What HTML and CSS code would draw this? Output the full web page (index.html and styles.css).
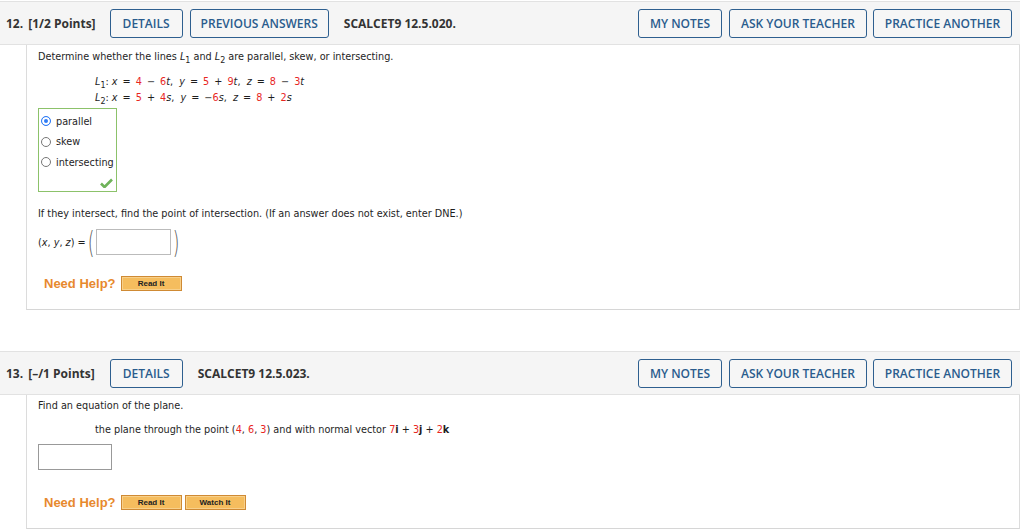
FILE: index.html
```html
<!DOCTYPE html>
<html>
<head>
<meta charset="utf-8">
<link rel="stylesheet" href="styles.css">
</head>
<body>
<div class="page">
  <section class="question q12">
    <header class="qhead">
      <span class="qnum">12.</span>
      <span class="qpts">[1/2 Points]</span>
      <button class="btn">DETAILS</button>
      <button class="btn prev">PREVIOUS ANSWERS</button>
      <span class="qcode">SCALCET9 12.5.020.</span>
      <div class="right">
        <button class="btn w-notes">MY NOTES</button>
        <button class="btn w-ask">ASK YOUR TEACHER</button>
        <button class="btn w-prac">PRACTICE ANOTHER</button>
      </div>
    </header>
    <div class="panel p12">
      <p class="txt">Determine whether the lines <i>L</i><sub>1</sub> and <i>L</i><sub>2</sub> are parallel, skew, or intersecting.</p>
      <div class="eqs">
        <div class="eq"><i>L</i><sub>1</sub>: <i>x</i><span class="op">=</span><span class="r">4</span><span class="op">&minus;</span><span class="r">6</span><i>t</i>,&nbsp;&nbsp;<i>y</i><span class="op">=</span><span class="r">5</span><span class="op">+</span><span class="r">9</span><i>t</i>,&nbsp;&nbsp;<i>z</i><span class="op">=</span><span class="r">8</span><span class="op">&minus;</span><span class="r">3</span><i>t</i></div>
        <div class="eq"><i>L</i><sub>2</sub>: <i>x</i><span class="op">=</span><span class="r">5</span><span class="op">+</span><span class="r">4</span><i>s</i>,&nbsp;&nbsp;<i>y</i><span class="op">=</span>&minus;<span class="r">6</span><i>s</i>,&nbsp;&nbsp;<i>z</i><span class="op">=</span><span class="r">8</span><span class="op">+</span><span class="r">2</span><i>s</i></div>
      </div>
      <div class="choices">
        <label class="opt"><span class="radio on"></span>parallel</label>
        <label class="opt"><span class="radio"></span>skew</label>
        <label class="opt"><span class="radio"></span>intersecting</label>
        <svg class="check" width="13" height="10" viewBox="0 0 13 10"><path d="M1 5.5 L4.5 9 L12 1.5" fill="none" stroke="#6fb35a" stroke-width="2.6" stroke-linejoin="round"/></svg>
      </div>
      <p class="txt t2">If they intersect, find the point of intersection. (If an answer does not exist, enter DNE.)</p>
      <div class="pointrow">
        <span>(<i>x</i>, <i>y</i>, <i>z</i>) =</span>
        <span class="paren">(</span>
        <span class="box wide"></span>
        <span class="paren">)</span>
      </div>
      <div class="help">
        <span class="need">Need Help?</span>
        <span class="hbtn">Read It</span>
      </div>
    </div>
  </section>

  <section class="question q13">
    <header class="qhead">
      <span class="qnum">13.</span>
      <span class="qpts p2">[&ndash;/1 Points]</span>
      <button class="btn">DETAILS</button>
      <span class="qcode c2">SCALCET9 12.5.023.</span>
      <div class="right">
        <button class="btn w-notes">MY NOTES</button>
        <button class="btn w-ask">ASK YOUR TEACHER</button>
        <button class="btn w-prac">PRACTICE ANOTHER</button>
      </div>
    </header>
    <div class="panel p13">
      <p class="txt">Find an equation of the plane.</p>
      <p class="txt indent">the plane through the point (<span class="r">4</span>, <span class="r">6</span>, <span class="r">3</span>) and with normal vector <span class="r">7</span><b>i</b> + <span class="r">3</span><b>j</b> + <span class="r">2</span><b>k</b></p>
      <span class="box plain"></span>
      <div class="help h2">
        <span class="need">Need Help?</span>
        <span class="hbtn">Read It</span>
        <span class="hbtn watch">Watch It</span>
      </div>
    </div>
  </section>
</div>
</body>
</html>
```

FILE: styles.css
```css
* { box-sizing: border-box; }
html, body { margin: 0; padding: 0; background: #fff; }
.page { width: 1020px; padding-top: 1px; }

.qhead {
  display: flex;
  align-items: center;
  height: 44px;
  background: #f5f5f5;
  border-top: 1px solid #e2e2e2;
  border-bottom: 1px solid #e2e2e2;
  font-family: "Open Sans", sans-serif;
  font-size: 12px;
  font-weight: 700;
  color: #333;
  padding-left: 6px;
  padding-right: 8px;
}
.qnum { margin-right: 5px; }
.qpts { margin-right: 14px; }
.qpts.p2 { margin-right: 15px; }
.qcode { margin-left: 8px; }
.btn {
  font-family: "Open Sans", sans-serif;
  font-size: 12px;
  font-weight: 600;
  color: #2a5c8d;
  background: #f6f6f6;
  border: 1.5px solid #2e5f8f;
  border-radius: 3px;
  height: 29px;
  padding: 0 12px;
  margin: 0 7px 0 0;
  cursor: pointer;
}
.btn.prev { padding: 0 10px; }
.right { margin-left: auto; display: flex; }
.right .btn { padding: 0; margin-right: 7px; }
.right .btn:last-child { margin-right: 0; }
.w-notes { width: 84px; }
.w-ask { width: 138px; margin-right: 6px !important; }
.w-prac { width: 139px; }

.panel {
  margin-left: 26px;
  border-left: 1px solid #dcdcdc;
  border-right: 1px solid #dcdcdc;
  border-bottom: 1px solid #d6d6d6;
  padding: 0 0 0 11px;
  font-family: "DejaVu Sans", Verdana, sans-serif;
  font-size: 9.7px;
  color: #1e1e1e;
}
.p12 { height: 265px; padding-top: 5px; }
.p13 { height: 134px; padding-top: 4px; }
.q13 { margin-top: 41px; }

.txt { margin: 0; line-height: 14px; }
.indent { margin: 10px 0 0 57px; }
sub { font-size: 8px; vertical-align: -3px; line-height: 0; }
.r { color: #e8261f; }
.eqs { margin: 10px 0 0 57px; }
.eq { line-height: 16px; white-space: nowrap; }
.op { padding: 0 5px; }

.choices {
  position: relative;
  width: 79px;
  height: 84px;
  margin-top: 2px;
  border: 1px solid #8cc26a;
  padding: 2px 0 0 2px;
}
.opt { display: flex; align-items: center; height: 20.5px; white-space: nowrap; }
.radio {
  width: 10px; height: 10px;
  border: 1px solid #777;
  border-radius: 50%;
  margin-right: 5px;
  background: #fff;
}
.radio.on {
  border: 1px solid #2f7cf6;
  background: #2f7cf6;
  box-shadow: inset 0 0 0 2px #fff;
}
.check { position: absolute; right: 3px; bottom: 3px; }

.t2 { margin-top: 15px; }
.pointrow { display: flex; align-items: center; margin-top: 6px; height: 30px; }
.paren { font-family: "DejaVu Sans", sans-serif; font-weight: 200; font-size: 31px; color: #555; transform: scaleX(0.55); line-height: 30px; margin: 0 -1px; }
.box { display: block; border: 1px solid #a9a9a9; background: #fff; }
.box.wide { width: 75px; height: 26px; border-color: #bbb; }
.box.plain { width: 74px; height: 26px; margin-top: 7px; border-color: #999; }

.help { display: flex; align-items: center; margin-top: 19px; padding-left: 6px; }
.h2 { margin-top: 25px; }
.need { font-family: "Liberation Sans", Arial, sans-serif; font-weight: 700; font-size: 13px; color: #e7892e; margin-right: 5px; }
.hbtn {
  display: flex; align-items: center; justify-content: center;
  width: 61px; height: 15px;
  background: #f5bd5e;
  border: 1px solid #cf8a34;
  box-shadow: inset 0 0 0 1px #f8d08a;
  font-family: "Liberation Sans", Arial, sans-serif;
  font-size: 8px; font-weight: 700; color: #222;
  margin-right: 3px;
}
```
